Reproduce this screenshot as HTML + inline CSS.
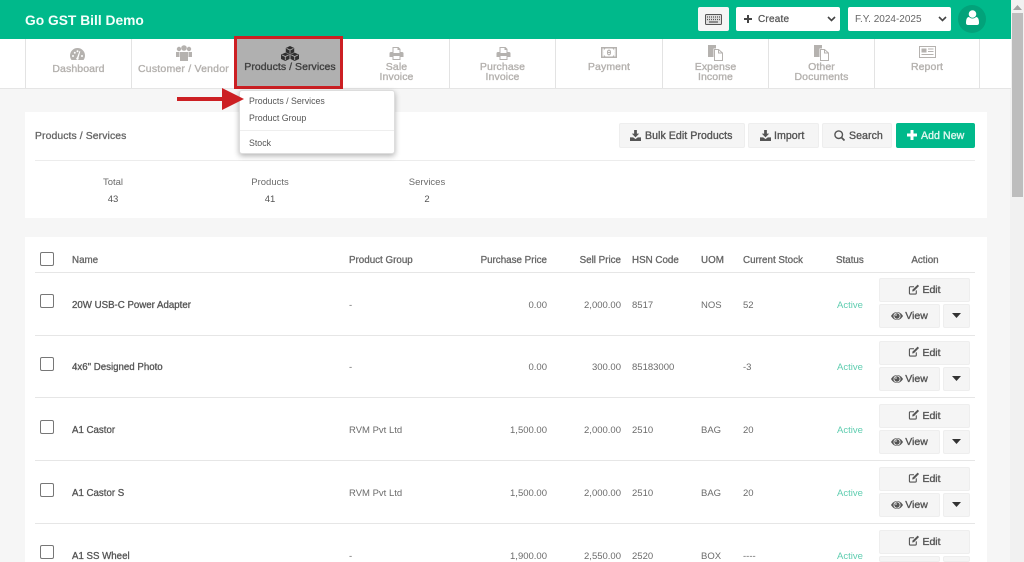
<!DOCTYPE html>
<html><head><meta charset="utf-8"><style>
*{box-sizing:border-box}
html,body{margin:0;padding:0;width:1024px;height:562px;overflow:hidden;background:#f6f6f6}
body{position:relative;font-family:"Liberation Sans",sans-serif;font-size:9.5px;letter-spacing:0;color:#555}
div,a,span.a{position:absolute;white-space:nowrap}
svg{position:absolute;display:block}
.sep{top:39px;width:1px;height:49px;background:#e3e3e3}
.nt{font-size:10.5px;line-height:10px;color:#b4b1ae;text-align:center;letter-spacing:.1px;-webkit-text-stroke:.35px currentColor}
.btn{background:#f5f5f5;border:1px solid #eee;border-radius:2px;height:25px;line-height:25px;font-size:10.6px;letter-spacing:.05px;color:#555;-webkit-text-stroke:.35px currentColor}
.t{line-height:12px;transform:translateY(-5px)}
.h{color:#666;font-size:9.8px;letter-spacing:0;-webkit-text-stroke:.3px currentColor}
.n{color:#555;font-size:9.7px;letter-spacing:0;-webkit-text-stroke:.3px currentColor}
.r{text-align:right}
.g{color:#6b6b6b}
.cb{width:14px;height:14px;border:1px solid #777;border-radius:2px;background:#fff;left:40px}
.ln{left:35px;width:940px;height:1px;background:#e6e6e6}
.ab{background:#f5f5f5;border:1px solid #eee;border-radius:2px;height:24px;line-height:23px;font-size:10.5px;color:#555;text-align:center;-webkit-text-stroke:.35px currentColor}
.dd{font-size:8.8px;color:#555}
</style></head><body>
<svg width="0" height="0" style="position:absolute"><defs>
<symbol id="dl" viewBox="0 0 12 12"><path fill="currentColor" d="M4.500 0h3v4h2.500L6 8 2 4h2.500z"/><path fill="currentColor" d="M0 8h3.500L6 10l2.500-2H12v4H0z"/></symbol>
<symbol id="ed" viewBox="0 0 12 12"><path fill="none" stroke="currentColor" stroke-width="1.200" d="M8.500 7v3a1 1 0 0 1-1 1H2a1 1 0 0 1-1-1V4a1 1 0 0 1 1-1h4"/><path fill="currentColor" d="M10 .7l1.500 1.500L6 7.800 4 8.200l.4-2z"/></symbol>
<symbol id="ey" viewBox="0 0 12 8"><path fill="currentColor" d="M0 4C1.500 1.500 3.500 0 6 0s4.500 1.500 6 4c-1.500 2.500-3.500 4-6 4S1.500 6.500 0 4z"/><circle cx="6" cy="4" r="3.100" fill="currentColor" stroke="#f5f5f5" stroke-width=".8"/><circle cx="5" cy="3" r=".8" fill="#f5f5f5"/></symbol>
<symbol id="pr" viewBox="0 0 14 13"><path fill="currentColor" fill-rule="evenodd" d="M3 0h6l2 2v3h1.500A1.500 1.500 0 0 1 14 6.500V10h-3v3H3v-3H0V6.500A1.500 1.500 0 0 1 1.500 5H3zm1 1v5h6V3H8V1zm0 8v3h6V9z"/></symbol>
<symbol id="doc" viewBox="0 0 15 16"><path fill="currentColor" d="M0 0h8v3.500H5.500V12H0z"/><path fill="none" stroke="currentColor" d="M6.500 4.500h4l4 3.500v7.500h-8z"/><path fill="currentColor" d="M10 4.500h1v3h3.500v1H10z"/></symbol>
</defs></svg>

<!-- scrollbar -->
<div style="left:1010px;top:0;width:14px;height:562px;background:#f1f1f1"></div>
<div style="left:1012px;top:13px;width:11px;height:184px;background:#bdbdbd"></div>
<svg style="left:1013px;top:5px" width="9" height="5"><path fill="#a3a3a3" d="M4.500 0L9 5H0z"/></svg>

<!-- header -->
<div style="left:0;top:0;width:1010.500px;height:39px;background:#00b98b"></div>
<div style="left:25px;top:12px;font-size:13.800px;line-height:17px;font-weight:bold;color:#f4fffb">Go GST Bill Demo</div>
<div style="left:698px;top:7px;width:31px;height:24px;background:#f5f5f5;border-radius:2px"></div>
<svg style="left:705px;top:14px" width="17" height="11" viewBox="0 0 17 11"><rect x=".5" y=".5" width="16" height="10" rx="1" fill="#ddd" stroke="#555"/><path stroke="#555" stroke-width="1.200" stroke-dasharray="1 1" d="M2 3h13M2 5.500h13"/><path stroke="#555" stroke-width="1.200" d="M4 8h9"/></svg>
<div style="left:736px;top:7px;width:104px;height:24px;background:#fff;border-radius:2px"></div>
<svg style="left:744px;top:15px" width="8" height="8"><path fill="#444" d="M3 0h2v3h3v2H5v3H3V5H0V3h3z"/></svg>
<div style="left:758px;top:14px;line-height:12px;font-size:10px;color:#555;letter-spacing:.2px;-webkit-text-stroke:.25px currentColor">Create</div>
<svg style="left:827px;top:16px" width="9" height="6"><path fill="none" stroke="#444" stroke-width="1.600" d="M1 1l3.500 3.500L8 1"/></svg>
<div style="left:848px;top:7px;width:103px;height:24px;background:#fff;border-radius:2px"></div>
<div style="left:855px;top:14px;line-height:12px;font-size:10px;color:#666">F.Y. 2024-2025</div>
<svg style="left:938px;top:16px" width="9" height="6"><path fill="none" stroke="#444" stroke-width="1.600" d="M1 1l3.500 3.500L8 1"/></svg>
<div style="left:958px;top:5px;width:28px;height:28px;border-radius:50%;background:#02a27a"></div>
<svg style="left:966px;top:10px" width="13" height="15" viewBox="0 0 13 15"><circle cx="6.500" cy="4" r="3.800" fill="#fff"/><path fill="#fff" d="M0 13c0-4 1-6 3-6 1 1 2 1.500 3.500 1.500S9 8 10 7c2 0 3 2 3 6 0 1.200-.8 2-2 2H2c-1.200 0-2-.8-2-2z"/></svg>

<!-- nav -->
<div style="left:0;top:39px;width:1010.500px;height:50px;background:#fff;border-bottom:1px solid #e5e5e5"></div>
<div class="sep" style="left:25px"></div><div class="sep" style="left:131px"></div><div class="sep" style="left:449px"></div><div class="sep" style="left:555px"></div><div class="sep" style="left:662px"></div><div class="sep" style="left:768px"></div><div class="sep" style="left:874px"></div><div class="sep" style="left:979px"></div>

<svg style="left:70px;top:48px;color:#b5b2af" width="15" height="12" viewBox="0 0 15 12"><path fill="currentColor" fill-rule="evenodd" d="M7.500 0A7.500 7.500 0 0 0 0 7.500c0 1.700.5 3.200 1.500 4.500h12c1-1.300 1.500-2.800 1.500-4.500A7.500 7.500 0 0 0 7.500 0zM7 9.500L9.500 3l.8.4L8.500 10A1.200 1.200 0 1 1 7 9.500zM3 7a1 1 0 1 1 0 2 1 1 0 0 1 0-2zm1.800-3.300a1 1 0 1 1 0 2 1 1 0 0 1 0-2zM7.500 2.300a1 1 0 1 1 0 2 1 1 0 0 1 0-2zM12 7a1 1 0 1 1 0 2 1 1 0 0 1 0-2z"/></svg>
<div class="nt" style="left:26px;width:105px;top:63.500px">Dashboard</div>

<svg style="left:176px;top:45px" width="16" height="16" viewBox="0 0 16 16"><g fill="#b5b2af"><circle cx="3" cy="4" r="2.200"/><circle cx="13" cy="4" r="2.200"/><circle cx="8" cy="3" r="2.800"/><path d="M0 7h3.500v5H0zM12.500 7H16v5h-3.500z"/><path d="M4 7h8v9H4z"/></g></svg>
<div class="nt" style="left:132px;width:103px;top:63.500px;letter-spacing:.2px">Customer / Vendor</div>

<div style="left:234px;top:36px;width:109px;height:53px;background:#b0b0b0;border:3.500px solid #cc1f23"></div>
<svg style="left:281px;top:46px" width="18" height="15" viewBox="0 0 18 15"><g fill="#2f2f2f"><path d="M9 0l4.200 2v4.400L9 8.400 4.800 6.400V2z"/><path d="M4.300 6.600l4.200 2V13l-4.200 2L0 13V8.600z"/><path d="M13.700 6.600L18 8.600V13l-4.300 2-4.200-2V8.600z"/></g><path stroke="#b0b0b0" stroke-width=".8" fill="none" d="M5.500 2.400L9 4l3.500-1.600M9 4v3.600M1 9l3.300 1.500L7.700 9M4.300 10.500v3.600M10.300 9l3.400 1.500L17 9M13.700 10.500v3.600"/></svg>
<div class="nt" style="left:235.500px;width:109px;top:62px;color:#3f3f3f;letter-spacing:.05px">Products / Services</div>

<svg style="left:389px;top:47px;width:15px;height:13px;color:#b5b2af" viewBox="0 0 14 13"><use href="#pr"/></svg>
<div class="nt" style="left:344px;width:105px;top:62px">Sale<br>Invoice</div>
<svg style="left:496px;top:47px;width:15px;height:13px;color:#b5b2af" viewBox="0 0 14 13"><use href="#pr"/></svg>
<div class="nt" style="left:450px;width:105px;top:62px">Purchase<br>Invoice</div>

<svg style="left:601px;top:47px" width="16" height="11" viewBox="0 0 16 11"><path fill="#b5b2af" fill-rule="evenodd" d="M0 0h16v11H0zm1.500 1.500v8h1.300V1.500zm3 0a3.500 4.500 0 0 0 0 8h7a3.500 4.500 0 0 0 0-8zm8.700 0v8h1.300v-8z"/><path fill="none" stroke="#b5b2af" stroke-width="1.100" d="M8 3.200c1 0 1.500 1 1.500 2.300S9 7.800 8 7.800 6.500 6.800 6.500 5.500 7 3.200 8 3.200zM6.500 5.500h3"/></svg>
<div class="nt" style="left:556px;width:106px;top:62px">Payment</div>

<svg style="left:708px;top:45px;width:15px;height:16px;color:#b5b2af" viewBox="0 0 15 16"><use href="#doc"/></svg>
<div class="nt" style="left:663px;width:105px;top:62px">Expense<br>Income</div>
<svg style="left:814px;top:45px;width:15px;height:16px;color:#b5b2af" viewBox="0 0 15 16"><use href="#doc"/></svg>
<div class="nt" style="left:769px;width:105px;top:62px">Other<br>Documents</div>

<svg style="left:919px;top:46px" width="17" height="12" viewBox="0 0 17 12"><rect x=".5" y=".5" width="16" height="11" fill="none" stroke="#b5b2af"/><path fill="#b5b2af" d="M2.500 2.500h5v4h-5zM9 2.500h5.500v1H9zM9 5h5.500v1H9zM2.500 8h12v1h-12z"/></svg>
<div class="nt" style="left:875px;width:104px;top:62px">Report</div>

<!-- card 1 -->
<div style="left:25px;top:112px;width:962px;height:106px;background:#fff"></div>
<div class="t" style="left:35px;top:136px;font-size:10.400px;letter-spacing:.1px;color:#666;-webkit-text-stroke:.3px currentColor">Products / Services</div>
<div class="btn" style="left:619px;top:123px;width:126px;padding-left:25px">Bulk Edit Products</div>
<svg style="left:630px;top:130px;width:11px;height:11px;color:#555" viewBox="0 0 12 12"><use href="#dl"/></svg>
<div class="btn" style="left:748px;top:123px;width:71px;padding-left:25px">Import</div>
<svg style="left:760px;top:130px;width:11px;height:11px;color:#555" viewBox="0 0 12 12"><use href="#dl"/></svg>
<div class="btn" style="left:822px;top:123px;width:70px;padding-left:26px">Search</div>
<svg style="left:834px;top:130px" width="11" height="11" viewBox="0 0 11 11"><circle cx="4.700" cy="4.700" r="3.800" fill="none" stroke="#555" stroke-width="1.400"/><path stroke="#555" stroke-width="1.700" d="M7.500 7.500L10.500 10.500"/></svg>
<div class="btn" style="left:896px;top:123px;width:79px;padding-left:24px;background:#00b98b;border-color:#00b98b;color:#dff7ef">Add New</div>
<svg style="left:907px;top:130px" width="10" height="10"><path fill="#fff" d="M3.500 0h3v3.500H10v3H6.500V10h-3V6.500H0v-3h3.500z"/></svg>
<div style="left:35px;top:160px;width:940px;height:1px;background:#ececec"></div>
<div class="t g" style="left:63px;width:100px;text-align:center;top:182px">Total</div>
<div class="t" style="left:63px;width:100px;text-align:center;top:199px">43</div>
<div class="t g" style="left:220px;width:100px;text-align:center;top:182px">Products</div>
<div class="t" style="left:220px;width:100px;text-align:center;top:199px">41</div>
<div class="t g" style="left:377px;width:100px;text-align:center;top:182px">Services</div>
<div class="t" style="left:377px;width:100px;text-align:center;top:199px">2</div>

<!-- dropdown -->
<div style="left:239px;top:90px;width:156px;height:64px;background:#fff;border:1px solid #ddd;border-radius:3px;box-shadow:0 2px 6px rgba(0,0,0,.3)"></div>
<div class="t dd" style="left:249px;top:100px">Products / Services</div>
<div class="t dd" style="left:249px;top:117px">Product Group</div>
<div style="left:240px;top:130px;width:154px;height:1px;background:#eee"></div>
<div class="t dd" style="left:249px;top:142px">Stock</div>
<svg style="left:177px;top:88px" width="67" height="22" viewBox="0 0 67 22"><path fill="#cc1f23" d="M0 9h45V0l22 11-22 11v-9H0z"/></svg>

<!-- card 2 -->
<div style="left:25px;top:237px;width:962px;height:325px;background:#fff"></div>
<div class="cb" style="top:252px"></div>
<div class="t h" style="left:72px;top:260px">Name</div>
<div class="t h" style="left:349px;top:260px">Product Group</div>
<div class="t h r" style="left:447px;width:100px;top:260px">Purchase Price</div>
<div class="t h r" style="left:521px;width:100px;top:260px">Sell Price</div>
<div class="t h" style="left:632px;top:260px">HSN Code</div>
<div class="t h" style="left:701px;top:260px">UOM</div>
<div class="t h" style="left:743px;top:260px">Current Stock</div>
<div class="t h" style="left:836px;top:260px">Status</div>
<div class="t h" style="left:875px;width:100px;text-align:center;top:260px">Action</div>
<div class="ln" style="top:272px"></div>
<div class="ln" style="top:335px"></div>
<div class="ln" style="top:397px"></div>
<div class="ln" style="top:460px"></div>
<div class="ln" style="top:523px"></div>

<!-- row 1 -->
<div class="cb" style="top:294px"></div>
<div class="t n" style="left:72px;top:305px">20W USB-C Power Adapter</div>
<div class="t g" style="left:349px;top:305px">-</div>
<div class="t g r" style="left:447px;width:100px;top:305px">0.00</div>
<div class="t g r" style="left:521px;width:100px;top:305px">2,000.00</div>
<div class="t g" style="left:632px;top:305px">8517</div>
<div class="t g" style="left:701px;top:305px">NOS</div>
<div class="t g" style="left:743px;top:305px">52</div>
<div class="t" style="left:837px;top:305px;color:#5fcdb0">Active</div>
<div class="ab" style="left:879px;top:278px;width:91px;padding-left:14px">Edit</div>
<svg style="left:908px;top:284px;width:12px;height:11px;color:#555" viewBox="0 0 12 12"><use href="#ed"/></svg>
<div class="ab" style="left:879px;top:304px;width:61px;padding-left:14px">View</div>
<svg style="left:891px;top:312px;width:12px;height:8px;color:#555" viewBox="0 0 12 8"><use href="#ey"/></svg>
<div class="ab" style="left:943px;top:304px;width:27px"></div>
<svg style="left:952px;top:313px" width="9" height="5"><path fill="#333" d="M0 0h9L4.500 5z"/></svg>

<!-- row 2 -->
<div class="cb" style="top:357px"></div>
<div class="t n" style="left:72px;top:367px">4x6" Designed Photo</div>
<div class="t g" style="left:349px;top:367px">-</div>
<div class="t g r" style="left:447px;width:100px;top:367px">0.00</div>
<div class="t g r" style="left:521px;width:100px;top:367px">300.00</div>
<div class="t g" style="left:632px;top:367px">85183000</div>
<div class="t g" style="left:743px;top:367px">-3</div>
<div class="t" style="left:837px;top:367px;color:#5fcdb0">Active</div>
<div class="ab" style="left:879px;top:341px;width:91px;padding-left:14px">Edit</div>
<svg style="left:908px;top:346px;width:12px;height:11px;color:#555" viewBox="0 0 12 12"><use href="#ed"/></svg>
<div class="ab" style="left:879px;top:367px;width:61px;padding-left:14px">View</div>
<svg style="left:891px;top:375px;width:12px;height:8px;color:#555" viewBox="0 0 12 8"><use href="#ey"/></svg>
<div class="ab" style="left:943px;top:367px;width:27px"></div>
<svg style="left:952px;top:376px" width="9" height="5"><path fill="#333" d="M0 0h9L4.500 5z"/></svg>

<!-- row 3 -->
<div class="cb" style="top:420px"></div>
<div class="t n" style="left:72px;top:430px">A1 Castor</div>
<div class="t g" style="left:349px;top:430px">RVM Pvt Ltd</div>
<div class="t g r" style="left:447px;width:100px;top:430px">1,500.00</div>
<div class="t g r" style="left:521px;width:100px;top:430px">2,000.00</div>
<div class="t g" style="left:632px;top:430px">2510</div>
<div class="t g" style="left:701px;top:430px">BAG</div>
<div class="t g" style="left:743px;top:430px">20</div>
<div class="t" style="left:837px;top:430px;color:#5fcdb0">Active</div>
<div class="ab" style="left:879px;top:404px;width:91px;padding-left:14px">Edit</div>
<svg style="left:908px;top:409px;width:12px;height:11px;color:#555" viewBox="0 0 12 12"><use href="#ed"/></svg>
<div class="ab" style="left:879px;top:430px;width:61px;padding-left:14px">View</div>
<svg style="left:891px;top:438px;width:12px;height:8px;color:#555" viewBox="0 0 12 8"><use href="#ey"/></svg>
<div class="ab" style="left:943px;top:430px;width:27px"></div>
<svg style="left:952px;top:439px" width="9" height="5"><path fill="#333" d="M0 0h9L4.500 5z"/></svg>

<!-- row 4 -->
<div class="cb" style="top:483px"></div>
<div class="t n" style="left:72px;top:493px">A1 Castor S</div>
<div class="t g" style="left:349px;top:493px">RVM Pvt Ltd</div>
<div class="t g r" style="left:447px;width:100px;top:493px">1,500.00</div>
<div class="t g r" style="left:521px;width:100px;top:493px">2,000.00</div>
<div class="t g" style="left:632px;top:493px">2510</div>
<div class="t g" style="left:701px;top:493px">BAG</div>
<div class="t g" style="left:743px;top:493px">20</div>
<div class="t" style="left:837px;top:493px;color:#5fcdb0">Active</div>
<div class="ab" style="left:879px;top:467px;width:91px;padding-left:14px">Edit</div>
<svg style="left:908px;top:472px;width:12px;height:11px;color:#555" viewBox="0 0 12 12"><use href="#ed"/></svg>
<div class="ab" style="left:879px;top:493px;width:61px;padding-left:14px">View</div>
<svg style="left:891px;top:501px;width:12px;height:8px;color:#555" viewBox="0 0 12 8"><use href="#ey"/></svg>
<div class="ab" style="left:943px;top:493px;width:27px"></div>
<svg style="left:952px;top:502px" width="9" height="5"><path fill="#333" d="M0 0h9L4.500 5z"/></svg>

<!-- row 5 -->
<div class="cb" style="top:545px"></div>
<div class="t n" style="left:72px;top:556px">A1 SS Wheel</div>
<div class="t g" style="left:349px;top:556px">-</div>
<div class="t g r" style="left:447px;width:100px;top:556px">1,900.00</div>
<div class="t g r" style="left:521px;width:100px;top:556px">2,550.00</div>
<div class="t g" style="left:632px;top:556px">2520</div>
<div class="t g" style="left:701px;top:556px">BOX</div>
<div class="t g" style="left:743px;top:556px">----</div>
<div class="t" style="left:837px;top:556px;color:#5fcdb0">Active</div>
<div class="ab" style="left:879px;top:530px;width:91px;padding-left:14px">Edit</div>
<svg style="left:908px;top:535px;width:12px;height:11px;color:#555" viewBox="0 0 12 12"><use href="#ed"/></svg>
<div class="ab" style="left:879px;top:556px;width:61px;height:6px"></div>
<div class="ab" style="left:943px;top:556px;width:27px;height:6px"></div>
</body></html>
